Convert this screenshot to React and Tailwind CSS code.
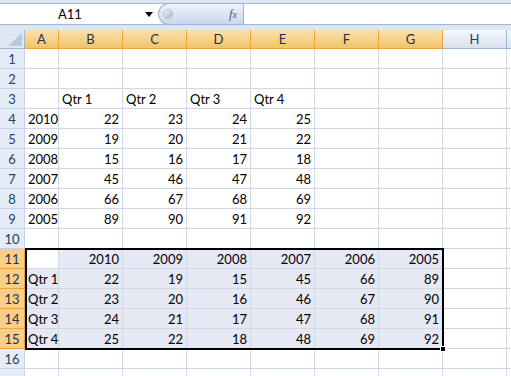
import React from 'react'

const COLS = ['A', 'B', 'C', 'D', 'E', 'F', 'G', 'H', 'I']
const SEL_COLS = new Set(['A', 'B', 'C', 'D', 'E', 'F', 'G'])
const SEL_ROWS = new Set([11, 12, 13, 14, 15])

// sheet contents by row / column
const DATA = {
  3: { B: 'Qtr 1', C: 'Qtr 2', D: 'Qtr 3', E: 'Qtr 4' },
  4: { A: '2010', B: 22, C: 23, D: 24, E: 25 },
  5: { A: '2009', B: 19, C: 20, D: 21, E: 22 },
  6: { A: '2008', B: 15, C: 16, D: 17, E: 18 },
  7: { A: '2007', B: 45, C: 46, D: 47, E: 48 },
  8: { A: '2006', B: 66, C: 67, D: 68, E: 69 },
  9: { A: '2005', B: 89, C: 90, D: 91, E: 92 },
  11: { B: 2010, C: 2009, D: 2008, E: 2007, F: 2006, G: 2005 },
  12: { A: 'Qtr 1', B: 22, C: 19, D: 15, E: 45, F: 66, G: 89 },
  13: { A: 'Qtr 2', B: 23, C: 20, D: 16, E: 46, F: 67, G: 90 },
  14: { A: 'Qtr 3', B: 24, C: 21, D: 17, E: 47, F: 68, G: 91 },
  15: { A: 'Qtr 4', B: 25, C: 22, D: 18, E: 48, F: 69, G: 92 },
}

const GRID = 'grid grid-cols-[25px_34px_repeat(8,64px)]'

function FormulaBar() {
  return (
    <div>
      <div className="h-[3px] bg-[#dae5f3]" />
      <div className="h-[1px] bg-[#a3b8d3]" />
      <div className="flex h-[20px] bg-white">
        <div className="relative w-[158px] shrink-0">
          <span className="absolute left-[58px] top-0 leading-[20px] text-[13px] text-black">A11</span>
          <svg className="absolute left-[145px] top-[8px]" width="8" height="5" viewBox="0 0 8 5">
            <path d="M0 0h8L4 5z" fill="#000" />
          </svg>
        </div>
        <div className="relative w-[85px] shrink-0 rounded-l-full border border-r-0 border-[#9db3cf] bg-gradient-to-b from-[#eef3fa] to-[#c9d8ec] -mt-[1px] h-[22px]">
          <div className="absolute left-[4px] top-[5px] w-[10px] h-[10px] rounded-full bg-gradient-to-br from-[#f4f6f9] to-[#a9b6c6] border border-[#b3c0cf]" />
          <span className="absolute right-[6px] top-0 leading-[20px] text-[13px] italic text-[#4b5a70] [font-family:'Liberation_Serif',serif]">
            f<span className="text-[10px]">x</span>
          </span>
        </div>
        <div className="flex-1 border-l border-[#9db3cf]" />
      </div>
      <div className="h-[1px] bg-[#a6b6ca]" />
      <div className="h-[5px] bg-[#dde7f4]" />
    </div>
  )
}

function HeaderRow() {
  return (
    <div className={GRID}>
      <div className="relative h-[19px] bg-[#dfe7f3] border-r border-b border-[#9eb6ce]">
        <svg className="absolute right-[2px] bottom-[2px]" width="14" height="13" viewBox="0 0 14 13">
          <path d="M14 0V13H0z" fill="#b6c9e0" />
        </svg>
      </div>
      {COLS.map((c) => {
        const sel = SEL_COLS.has(c)
        return (
          <div
            key={c}
            className={
              sel
                ? 'h-[19px] text-center leading-[19px] text-[13px] text-[#1f2f45] bg-gradient-to-b from-[#fae0ad] to-[#f2c468] border-r border-b border-[#f0a43c]'
                : 'h-[19px] text-center leading-[19px] text-[13px] text-[#27415f] bg-gradient-to-b from-[#f5f8fc] to-[#d9e2ee] border-r border-b border-[#9eb6ce]'
            }
          >
            {/* column I is cut off by the window edge */}
            {c === 'I' ? '' : c}
          </div>
        )
      })}
    </div>
  )
}

function Row({ n }) {
  const rowSel = SEL_ROWS.has(n)
  const vals = DATA[n] || {}
  return (
    <div className={GRID}>
      <div
        className={
          rowSel
            ? 'h-[20px] text-center leading-[20px] text-[13px] text-[#1f2f45] bg-[#f8cf88] border-r border-b border-[#f0a43c]'
            : 'h-[20px] text-center leading-[20px] text-[13px] text-[#27415f] bg-[#e4ecf7] border-r border-b border-[#c4d2e4]'
        }
      >
        {n < 17 ? n : ''}
      </div>
      {COLS.map((c) => {
        const v = vals[c]
        const inSel = rowSel && SEL_COLS.has(c) && !(n === 11 && c === 'A')
        const right = typeof v === 'number'
        return (
          <div
            key={c}
            className={`h-[20px] px-[3px] leading-[20px] text-[13px] whitespace-nowrap text-black border-r border-b border-[#d0d7e5] ${
              right ? 'text-right' : 'text-left'
            } ${inSel ? 'bg-[#e6e8f4]' : 'bg-white'}`}
          >
            {v}
          </div>
        )
      })}
    </div>
  )
}

export default function App() {
  const rows = Array.from({ length: 17 }, (_, i) => i + 1)
  return (
    <div className="relative w-[511px] h-[376px] overflow-hidden bg-white [font-family:Lato,'Liberation_Sans',sans-serif]">
      <FormulaBar />
      <HeaderRow />
      {rows.map((n) => (
        <Row key={n} n={n} />
      ))}
      {/* selection outline A11:G15 */}
      <div className="absolute left-[25px] top-[248px] w-[419px] h-[102px] border-2 border-black pointer-events-none" />
      <div className="absolute left-[440px] top-[346px] w-[6px] h-[6px] bg-black border border-white" />
    </div>
  )
}
